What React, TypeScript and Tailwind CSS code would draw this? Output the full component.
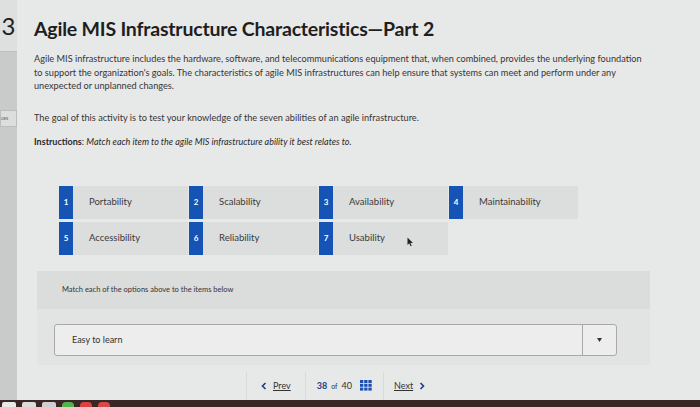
import React from 'react';

const items = [
    { n: 1, label: 'Portability' },
    { n: 2, label: 'Scalability' },
    { n: 3, label: 'Availability' },
    { n: 4, label: 'Maintainability' },
    { n: 5, label: 'Accessibility' },
    { n: 6, label: 'Reliability' },
    { n: 7, label: 'Usability' },
];

const Tile = ({ n, label }: { n: number; label: string }) => (
    <div className="flex h-[33px] bg-[#dcdddd]">
        <div className="w-[14px] bg-[#1553b4] flex items-center justify-center text-white text-[8px] font-bold">
            {n}
        </div>
        <div className="flex items-center pl-[16px] text-[9.5px] text-[#3a3a3a]">
            {label}
            {n === 7 && (
                <svg width="7" height="10" viewBox="0 0 7 10" className="ml-[22px] mt-[8px]">
                    <path d="M0.5 0.5 L0.5 8 L2.3 6.3 L3.6 9.3 L4.7 8.8 L3.5 5.9 L6 5.9 Z" fill="#222" />
                </svg>
            )}
        </div>
    </div>
);

export default function App() {
    return (
        <div
            className="w-[700px] h-[407px] flex flex-col overflow-hidden bg-[#e7e8e8]"
            style={{ fontFamily: 'Lato, "Open Sans", sans-serif' }}
        >
            <div className="flex flex-1 min-h-0">
                {/* Sidebar */}
                <div className="w-[17px] bg-[#c9caca] flex flex-col">
                    <div className="h-[52px] bg-[#dedfdf] border-b border-[#c0c0c0] flex justify-center">
                        <span className="text-[24px] leading-[52px] text-[#1e1e1e]">3</span>
                    </div>
                    <div className="mt-[58px] h-[17px] bg-[#dcdddd] border border-[#bdbdbd] text-[5px] text-[#666] flex items-center">
                        ces
                    </div>
                </div>

                {/* Main */}
                <div className="flex-1 pl-[17px] pt-[16px] flex flex-col">
                    <h1 className="text-[19.5px] leading-[26px] font-bold text-[#1e1e1e] tracking-[-0.2px]">
                        Agile MIS Infrastructure Characteristics—Part 2
                    </h1>
                    <p className="mt-[10px] w-[640px] text-[9.2px] leading-[13.5px] text-[#363636]">
                        Agile MIS infrastructure includes the hardware, software, and telecommunications equipment that, when combined, provides the underlying foundation
                        <br />
                        to support the organization's goals. The characteristics of agile MIS infrastructures can help ensure that systems can meet and perform under any
                        <br />
                        unexpected or unplanned changes.
                    </p>
                    <p className="mt-[18px] text-[9.2px] leading-[13px] text-[#363636]">
                        The goal of this activity is to test your knowledge of the seven abilities of an agile infrastructure.
                    </p>
                    <p className="mt-[11px] text-[9px] leading-[13px] text-[#2a2a2a]">
                        <span className="font-bold">Instructions</span>: <span className="italic">Match each item to the agile MIS infrastructure ability it best relates to.</span>
                    </p>

                    <div className="mt-[38px] ml-[25px] grid grid-cols-[129px_129px_129px_129px] gap-x-[1px] gap-y-[3px]">
                        {items.map((it) => (
                            <Tile key={it.n} n={it.n} label={it.label} />
                        ))}
                    </div>

                    {/* Answer panel */}
                    <div className="mt-[16px] ml-[3px] w-[613px] bg-[#e2e3e3]">
                        <div className="h-[38px] bg-[#dbdcdc] flex items-center pl-[25px] text-[7.5px] text-[#333]">
                            Match each of the options above to the items below
                        </div>
                        <div className="pt-[15px] pb-[9px] pl-[17px]">
                            <div className="w-[563px] h-[32px] flex bg-[#ededed] border border-[#a9a9a9] rounded-[3px]">
                                <div className="flex-1 flex items-center pl-[17px] text-[9px] text-[#333]">Easy to learn</div>
                                <div className="w-[34px] border-l border-[#a9a9a9] flex items-center justify-center">
                                    <svg width="5" height="4" viewBox="0 0 5 4">
                                        <path d="M0 0 L5 0 L2.5 4 Z" fill="#333" />
                                    </svg>
                                </div>
                            </div>
                        </div>
                    </div>

                    {/* Pagination */}
                    <div className="mt-[7px] ml-[212px] flex items-center h-[30px] text-[9px] text-[#333]">
                        <div className="h-full flex items-center px-[14px] border-l border-[#dadada]">
                            <svg width="6" height="8" viewBox="0 0 6 8" className="mr-[6px]">
                                <path d="M4.5 1 L1.5 4 L4.5 7" stroke="#1c3f8a" strokeWidth="1.6" fill="none" />
                            </svg>
                            <span className="underline">Prev</span>
                        </div>
                        <div className="h-full flex items-center px-[11px] border-l border-r border-[#dadada]">
                            <span className="font-bold text-[#1c3f8a]">38</span>
                            <span className="mx-[4px] text-[7px]">of</span>
                            <span>40</span>
                            <svg width="12" height="11" viewBox="0 0 12 11" className="ml-[8px]">
                                {[0, 1, 2].map((r) =>
                                    [0, 1, 2].map((c) => (
                                        <rect key={`${r}-${c}`} x={c * 4.2} y={r * 3.8} width="3.3" height="3" fill="#1c4fb0" />
                                    ))
                                )}
                            </svg>
                        </div>
                        <div className="h-full flex items-center px-[10px]">
                            <span className="underline">Next</span>
                            <svg width="6" height="8" viewBox="0 0 6 8" className="ml-[6px]">
                                <path d="M1.5 1 L4.5 4 L1.5 7" stroke="#1c3f8a" strokeWidth="1.6" fill="none" />
                            </svg>
                        </div>
                    </div>
                </div>
            </div>

            {/* Bezel / dock strip */}
            <div className="h-[7px] bg-[#3b2626] flex items-end gap-[6px] pl-[2px]">
                <div className="w-[14px] h-[5px] bg-[#e9e9e9] rounded-t-[2px]" />
                <div className="w-[14px] h-[5px] bg-[#dcdcdc] rounded-t-[2px]" />
                <div className="w-[14px] h-[5px] bg-[#d0d0d0] rounded-t-[2px]" />
                <div className="w-[12px] h-[5px] bg-[#4fb84a] rounded-t-[4px]" />
                <div className="w-[12px] h-[5px] bg-[#e04040] rounded-t-[4px]" />
                <div className="w-[12px] h-[5px] bg-[#d84a4a] rounded-t-[4px]" />
            </div>
        </div>
    );
}
